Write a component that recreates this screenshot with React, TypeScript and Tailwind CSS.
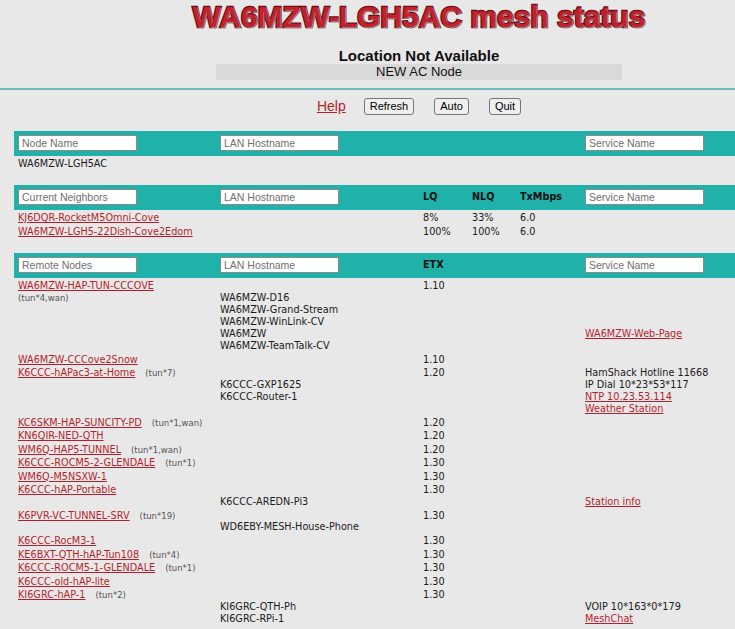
import React from "react"

type Row = {
  kind: "node" | "host"
  name?: string
  tun?: string
  note?: string
  host?: string
  etx?: string
  service?: string
  serviceLink?: boolean
}

const remote: Row[] = [
  { kind: "node", name: "WA6MZW-HAP-TUN-CCCOVE", etx: "1.10" },
  { kind: "host", note: "(tun*4,wan)", host: "WA6MZW-D16" },
  { kind: "host", host: "WA6MZW-Grand-Stream" },
  { kind: "host", host: "WA6MZW-WinLink-CV" },
  { kind: "host", host: "WA6MZW", service: "WA6MZW-Web-Page", serviceLink: true },
  { kind: "host", host: "WA6MZW-TeamTalk-CV" },
  { kind: "node", name: "WA6MZW-CCCove2Snow", etx: "1.10" },
  { kind: "node", name: "K6CCC-hAPac3-at-Home", tun: "(tun*7)", etx: "1.20", service: "HamShack Hotline 11668" },
  { kind: "host", host: "K6CCC-GXP1625", service: "IP Dial 10*23*53*117" },
  { kind: "host", host: "K6CCC-Router-1", service: "NTP 10.23.53.114", serviceLink: true },
  { kind: "host", service: "Weather Station", serviceLink: true },
  { kind: "node", name: "KC6SKM-HAP-SUNCITY-PD", tun: "(tun*1,wan)", etx: "1.20" },
  { kind: "node", name: "KN6QIR-NED-QTH", etx: "1.20" },
  { kind: "node", name: "WM6Q-HAP5-TUNNEL", tun: "(tun*1,wan)", etx: "1.20" },
  { kind: "node", name: "K6CCC-ROCM5-2-GLENDALE", tun: "(tun*1)", etx: "1.30" },
  { kind: "node", name: "WM6Q-M5NSXW-1", etx: "1.30" },
  { kind: "node", name: "K6CCC-hAP-Portable", etx: "1.30" },
  { kind: "host", host: "K6CCC-AREDN-Pi3", service: "Station info", serviceLink: true },
  { kind: "node", name: "K6PVR-VC-TUNNEL-SRV", tun: "(tun*19)", etx: "1.30" },
  { kind: "host", host: "WD6EBY-MESH-House-Phone" },
  { kind: "node", name: "K6CCC-RocM3-1", etx: "1.30" },
  { kind: "node", name: "KE6BXT-QTH-hAP-Tun108", tun: "(tun*4)", etx: "1.30" },
  { kind: "node", name: "K6CCC-ROCM5-1-GLENDALE", tun: "(tun*1)", etx: "1.30" },
  { kind: "node", name: "K6CCC-old-hAP-lite", etx: "1.30" },
  { kind: "node", name: "KI6GRC-hAP-1", tun: "(tun*2)", etx: "1.30" },
  { kind: "host", host: "KI6GRC-QTH-Ph", service: "VOIP 10*163*0*179" },
  { kind: "host", host: "KI6GRC-RPi-1", service: "MeshChat", serviceLink: true },
]

const verdana = "font-['DejaVu_Sans',Verdana,sans-serif]"
const arial = "font-['Liberation_Sans',Arial,sans-serif]"

function Field({ placeholder }: { placeholder: string }) {
  return (
    <input
      placeholder={placeholder}
      className={`${arial} h-[16px] w-[119px] border border-[#8a8a8a] bg-white px-[3px] text-[10.5px] text-black outline-none placeholder:text-[#6f6f6f]`}
    />
  )
}

function Header({ first, labels }: { first: string; labels: string[] }) {
  return (
    <div className="flex h-[25px] items-center bg-[#20b2aa] pl-[4px]">
      <div className="w-[202px]">
        <Field placeholder={first} />
      </div>
      <div className="w-[203px]">
        <Field placeholder="LAN Hostname" />
      </div>
      <div className="w-[49px] font-bold text-[#111]">{labels[0]}</div>
      <div className="w-[48px] font-bold text-[#111]">{labels[1]}</div>
      <div className="w-[65px] font-bold text-[#111]">{labels[2]}</div>
      <div className="flex-1">
        <Field placeholder="Service Name" />
      </div>
    </div>
  )
}

function Link({ children }: { children: React.ReactNode }) {
  return <a className="text-[#b51f2b] underline">{children}</a>
}

function TableRow({ row, cols = ["", "", ""] }: { row: Row; cols?: string[] }) {
  const node = row.kind === "node"
  return (
    <div className={`flex whitespace-nowrap pl-[4px] leading-[12px] ${node ? "h-[13.5px] pt-[2px]" : "h-[12px]"}`}>
      <div className="w-[202px]">
        {row.name && <Link>{row.name}</Link>}
        {row.tun && <span className="ml-[10px] text-[8.5px] text-[#555]">{row.tun}</span>}
        {row.note && <span className="text-[8.5px] text-[#555]">{row.note}</span>}
      </div>
      <div className="w-[203px]">{row.host}</div>
      <div className="w-[49px]">{row.etx ?? cols[0]}</div>
      <div className="w-[48px]">{cols[1]}</div>
      <div className="w-[65px]">{cols[2]}</div>
      <div className="flex-1">
        {row.service && (row.serviceLink ? <Link>{row.service}</Link> : row.service)}
      </div>
    </div>
  )
}

export default function App() {
  return (
    <div className="min-h-screen w-[735px] overflow-hidden bg-[#e8e8e8]">
      <div className="w-[838px]">
        {/* titre */}
        <div
          className={`${arial} h-[34px] text-center text-[30px] font-bold leading-[34px] text-[#c4212c] [-webkit-text-stroke:2.4px_#6e0d14] [paint-order:stroke_fill] [text-shadow:1px_1px_1px_#9a8a8a]`}
        >
          WA6MZW-LGH5AC mesh status
        </div>
        <div className={`${arial} mt-[14px] text-center text-[15px] font-bold leading-[16px] text-[#111]`}>
          Location Not Available
        </div>
        <div className={`${arial} mx-auto h-[16px] w-[406px] bg-[#d9d9d9] text-center text-[13px] leading-[16px] text-[#111]`}>
          NEW AC Node
        </div>
        <div className="mt-[8px] h-[2px] bg-[#6dbaba]" />

        {/* boutons */}
        <div className={`${arial} mt-[8px] flex h-[17px] items-center justify-center`}>
          <a className="mr-[18px] text-[14px] text-[#b51f2b] underline">Help</a>
          <button className="h-[17px] rounded-[3px] border border-[#767676] bg-[#efefef] px-[5px] text-[11px] leading-[15px] text-black">
            Refresh
          </button>
          <button className="ml-[20px] h-[17px] rounded-[3px] border border-[#767676] bg-[#efefef] px-[5px] text-[11px] leading-[15px] text-black">
            Auto
          </button>
          <button className="ml-[20px] h-[17px] rounded-[3px] border border-[#767676] bg-[#efefef] px-[5px] text-[11px] leading-[15px] text-black">
            Quit
          </button>
        </div>

        <div className={`${verdana} ml-[14px] w-[810px] text-[9.7px] text-[#1a1a1a]`}>
          {/* ce noeud */}
          <div className="mt-[16px]">
            <Header first="Node Name" labels={["", "", ""]} />
            <div className="flex h-[13.5px] pl-[4px] pt-[2px] leading-[12px]">WA6MZW-LGH5AC</div>
          </div>

          {/* voisins */}
          <div className="mt-[15.5px]">
            <Header first="Current Neighbors" labels={["LQ", "NLQ", "TxMbps"]} />
            <TableRow row={{ kind: "node", name: "KJ6DQR-RocketM5Omni-Cove" }} cols={["8%", "33%", "6.0"]} />
            <TableRow row={{ kind: "node", name: "WA6MZW-LGH5-22Dish-Cove2Edom" }} cols={["100%", "100%", "6.0"]} />
          </div>

          {/* noeuds distants */}
          <div className="mt-[16px]">
            <Header first="Remote Nodes" labels={["ETX", "", ""]} />
            {remote.map((r, i) => (
              <TableRow key={i} row={r} />
            ))}
          </div>
        </div>
      </div>
    </div>
  )
}
